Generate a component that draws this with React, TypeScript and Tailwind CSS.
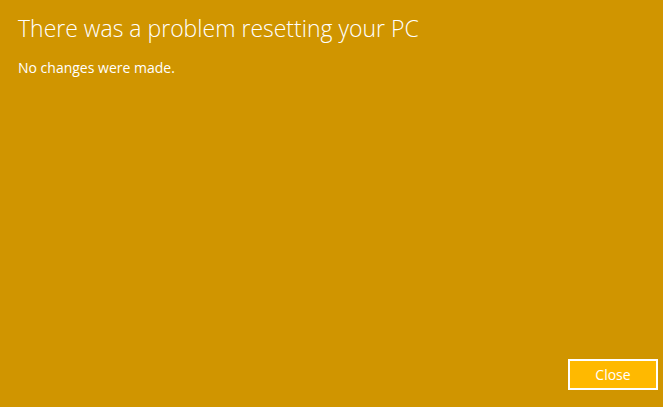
export default function App() {
  return (
    <div
      className="w-[663px] h-[407px] bg-[#d09500] text-white flex flex-col px-[18px] pt-[12px] pb-[17px]"
      style={{ fontFamily: '"Open Sans", "Noto Sans", sans-serif' }}
    >
      <h1 className="text-[23px] font-light leading-[32px]">There was a problem resetting your PC</h1>
      <p className="mt-[14px] text-[14px] leading-[20px]">No changes were made.</p>
      <div className="mt-auto flex justify-end -mr-[13px]">
        <button className="w-[90px] h-[31px] border-2 border-white bg-[#ffb900] text-[14px] text-white">
          Close
        </button>
      </div>
    </div>
  );
}
